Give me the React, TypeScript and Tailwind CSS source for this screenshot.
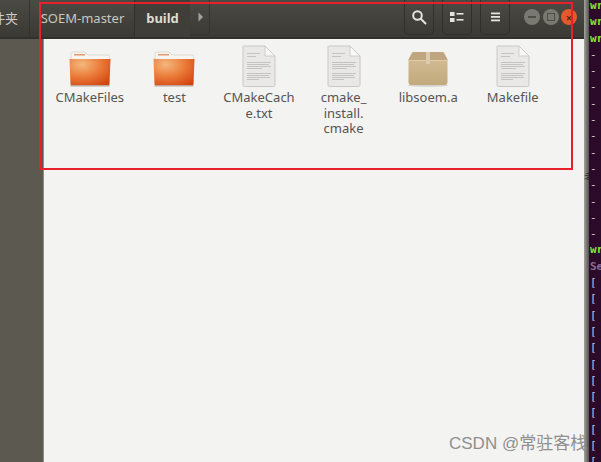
const files = [
  { name: "CMakeFiles", kind: "folder" },
  { name: "test", kind: "folder" },
  { name: "CMakeCach e.txt", kind: "doc" },
  { name: "cmake_ install. cmake", kind: "doc" },
  { name: "libsoem.a", kind: "package" },
  { name: "Makefile", kind: "doc" },
];

const termLines = [
  ...Array(3).fill("wr"),
  ...Array(12).fill("- -"),
  "wr",
  "Se",
  ...Array(12).fill("["),
];

function FolderIcon() {
  return (
    <svg width="44" height="42" viewBox="0 0 44 42">
      <defs>
        <radialGradient id="folderFill" cx="0.3" cy="0.2" r="0.95">
          <stop offset="0" stopColor="#f4b77e" />
          <stop offset="0.5" stopColor="#ea7a37" />
          <stop offset="1" stopColor="#d2400f" />
        </radialGradient>
      </defs>
      <path d="M3 8.500 Q3 7 4.500 7 H17 L20 10 H40 Q41.500 10 41.500 11.500 V16 H3 Z" fill="#f7f5f1" stroke="#d8d3cb" strokeWidth="0.8" />
      <rect x="6" y="9" width="11" height="1.500" fill="#e79a70" />
      <path d="M1.500 14 H42.500 L41.500 39 Q41.400 41 39.500 41 H4.500 Q2.600 41 2.500 39 Z" fill="url(#folderFill)" />
      <rect x="2.500" y="40" width="39" height="1.500" fill="#b9a89a" />
    </svg>
  );
}

function DocIcon() {
  return (
    <svg width="34" height="42" viewBox="0 0 34 42">
      <path d="M1.500 1 H23 L33 11 V40 Q33 41.500 31.500 41.500 H2.500 Q1 41.500 1 40 V1.500 Z" fill="#e9e8e6" stroke="#c9c8c5" strokeWidth="1" />
      <path d="M23 1 V11 H33 Z" fill="#f8f8f7" stroke="#c6c5c2" strokeWidth="0.8" />
      <g stroke="#9b9a98" strokeWidth="0.8" opacity="0.6">
        <path d="M5 8.500 H18" />
        <path d="M5 11.500 H14" />
        <path d="M5 17.500 H29 M5 19.500 H27 M5 21.500 H29 M5 23.500 H20" />
        <path d="M5 28.500 H29 M5 30.500 H27 M5 32.500 H28 M5 34.500 H17" />
      </g>
    </svg>
  );
}

function PackageIcon() {
  return (
    <svg width="42" height="42" viewBox="0 0 42 42">
      <defs>
        <linearGradient id="boxFill" x1="0" y1="0" x2="0" y2="1">
          <stop offset="0" stopColor="#d6c09a" />
          <stop offset="1" stopColor="#c2a97d" />
        </linearGradient>
      </defs>
      <ellipse cx="21" cy="40.500" rx="20.500" ry="1.500" fill="#d6d4cf" />
      <path d="M5 8 Q5.500 7 7 7 H35 Q36.500 7 37 8 L40.500 14 V37 Q40.500 40 38 40 H4 Q1.500 40 1.500 37 V14 Z" fill="url(#boxFill)" />
      <path d="M5 8 Q5.500 7 7 7 H35 Q36.500 7 37 8 L40.500 15 H1.500 Z" fill="#bfa680" />
      <path d="M1.500 15.500 H40.500" stroke="#dfcda9" strokeWidth="1" />
      <path d="M19 7 H23 V19 H19 Z" fill="#dccbaf" />
    </svg>
  );
}

function FileItem({ name, kind }: { name: string; kind: string }) {
  return (
    <div className="flex w-[84.600px] flex-col items-center">
      <div className="flex h-[42px] items-end justify-center">
        {kind === "folder" && <FolderIcon />}
        {kind === "doc" && <DocIcon />}
        {kind === "package" && <PackageIcon />}
      </div>
      <div className="mt-[3px] w-[80px] text-center font-['Noto_Sans',sans-serif] text-[13px] leading-[15.500px] text-[#555553]">
        {name.split(" ").map((part) => (
          <div key={part}>{part}</div>
        ))}
      </div>
    </div>
  );
}

function HeaderButton({ children }: { children: React.ReactNode }) {
  return (
    <div className="flex h-[35px] w-[30px] items-center justify-center rounded-b-[5px] border border-t-0 border-[#302f2b]">
      {children}
    </div>
  );
}

function WindowDot({ className, children }: { className: string; children: React.ReactNode }) {
  return (
    <div className={`flex h-[16px] w-[16px] items-center justify-center rounded-full ${className}`}>
      {children}
    </div>
  );
}

export default function App() {
  return (
    <div className="flex h-[462px] w-[601px] overflow-hidden bg-[#2c0a2a]">
      <div className="relative flex w-[584px] flex-col">
        <header className="flex h-[39px] items-start border-b-2 border-[#31302b] bg-gradient-to-b from-[#4b4a44] to-[#3a3934] font-['Noto_Sans','Noto_Sans_CJK_SC',sans-serif] text-[13px]">
          <div className="flex h-[37px] w-[30px] items-center justify-end border-r border-[#34332e] pr-[11px] text-[#cfcdc6]">
            <span className="whitespace-nowrap">件夹</span>
          </div>
          <div className="flex h-[37px] w-[105px] items-center justify-center border-r border-[#302f2a] pl-[1px] text-[#c9c7bf]">
            SOEM-master
          </div>
          <div className="flex h-[37px] w-[55px] items-center justify-center bg-[#3f3e38] font-bold text-[#dedcd5]">
            build
          </div>
          <div className="flex h-[35px] w-[20px] items-center justify-center rounded-br-[5px] border-r border-b border-[#34332e] pl-[2px]">
            <svg width="6" height="10" viewBox="0 0 6 10">
              <path d="M0.500 0.500 L5 5 L0.500 9.500 Z" fill="#a5a39c" />
            </svg>
          </div>
          <div className="ml-auto flex items-start gap-[8px] pr-[7px]">
            <HeaderButton>
              <svg width="16" height="16" viewBox="0 0 16 16" fill="none" stroke="#e6e4de" strokeWidth="2">
                <circle cx="6.500" cy="6.500" r="4.300" />
                <path d="M10 10 L14.500 14.500" strokeLinecap="round" />
              </svg>
            </HeaderButton>
            <HeaderButton>
              <svg width="14" height="12" viewBox="0 0 14 12" fill="#e6e4de">
                <rect x="0" y="1" width="4.500" height="4" />
                <rect x="0" y="7" width="4.500" height="4" />
                <rect x="6.500" y="2" width="7" height="1.600" />
                <rect x="6.500" y="8" width="7" height="1.600" />
              </svg>
            </HeaderButton>
            <HeaderButton>
              <svg width="11" height="10" viewBox="0 0 11 10" fill="#e6e4de">
                <rect x="1" y="0.500" width="9" height="1.800" />
                <rect x="1" y="4" width="9" height="1.800" />
                <rect x="1" y="7.500" width="9" height="1.800" />
              </svg>
            </HeaderButton>
            <div className="ml-[6px] mt-[9px] flex gap-[2.500px]">
              <WindowDot className="bg-[#7a7971]">
                <div className="h-[2px] w-[8px] bg-[#4d4c46]" />
              </WindowDot>
              <WindowDot className="bg-[#7a7971]">
                <div className="h-[8px] w-[8px] border border-[#4d4c46]" />
              </WindowDot>
              <WindowDot className="bg-[#e5592b]">
                <span className="text-[11px] leading-none font-bold text-[#5b2a17]">×</span>
              </WindowDot>
            </div>
          </div>
        </header>
        <div className="flex flex-1">
          <aside className="w-[44px] border-r border-[#8e8c84] bg-[#5b5950]" />
          <main className="flex-1 bg-[#f3f3f1] pl-[3.500px] pt-[6px]">
            <div className="flex items-start">
              {files.map((file) => (
                <FileItem key={file.name} name={file.name} kind={file.kind} />
              ))}
            </div>
          </main>
        </div>
        <div className="absolute left-[39px] top-[2px] h-[168px] w-[534px] border-2 border-[#e8202c]" />
      </div>
      <div className="relative w-[5px] bg-gradient-to-r from-[#a3a29e] to-[#55534f]">
        <span className="absolute top-[170px] left-0 w-[5px] overflow-hidden font-['Noto_Sans_CJK_SC',sans-serif] text-[11px] leading-[14px] text-[#333333]">
          考
        </span>
      </div>
      <div className="-mt-[2px] flex-1 overflow-hidden pl-[1px] font-['DejaVu_Sans_Mono',monospace] text-[11px] leading-[16.300px] font-bold whitespace-nowrap">
        {termLines.map((line, i) => (
          <div
            key={i}
            className={
              line === "wr"
                ? "text-[#8ae234]"
                : line === "Se"
                  ? "text-[#8a6a9a]"
                  : line === "["
                    ? "font-normal text-[#c5c0dc]"
                    : "font-normal text-[#d3d0d3]"
            }
          >
            {line}
          </div>
        ))}
      </div>
      <div className="absolute left-[449px] top-[434px] font-['Liberation_Sans','Noto_Sans_CJK_SC',sans-serif] text-[17px] leading-[20px] whitespace-nowrap text-[#8f8f8f]">
        CSDN @常驻客栈
      </div>
    </div>
  );
}
